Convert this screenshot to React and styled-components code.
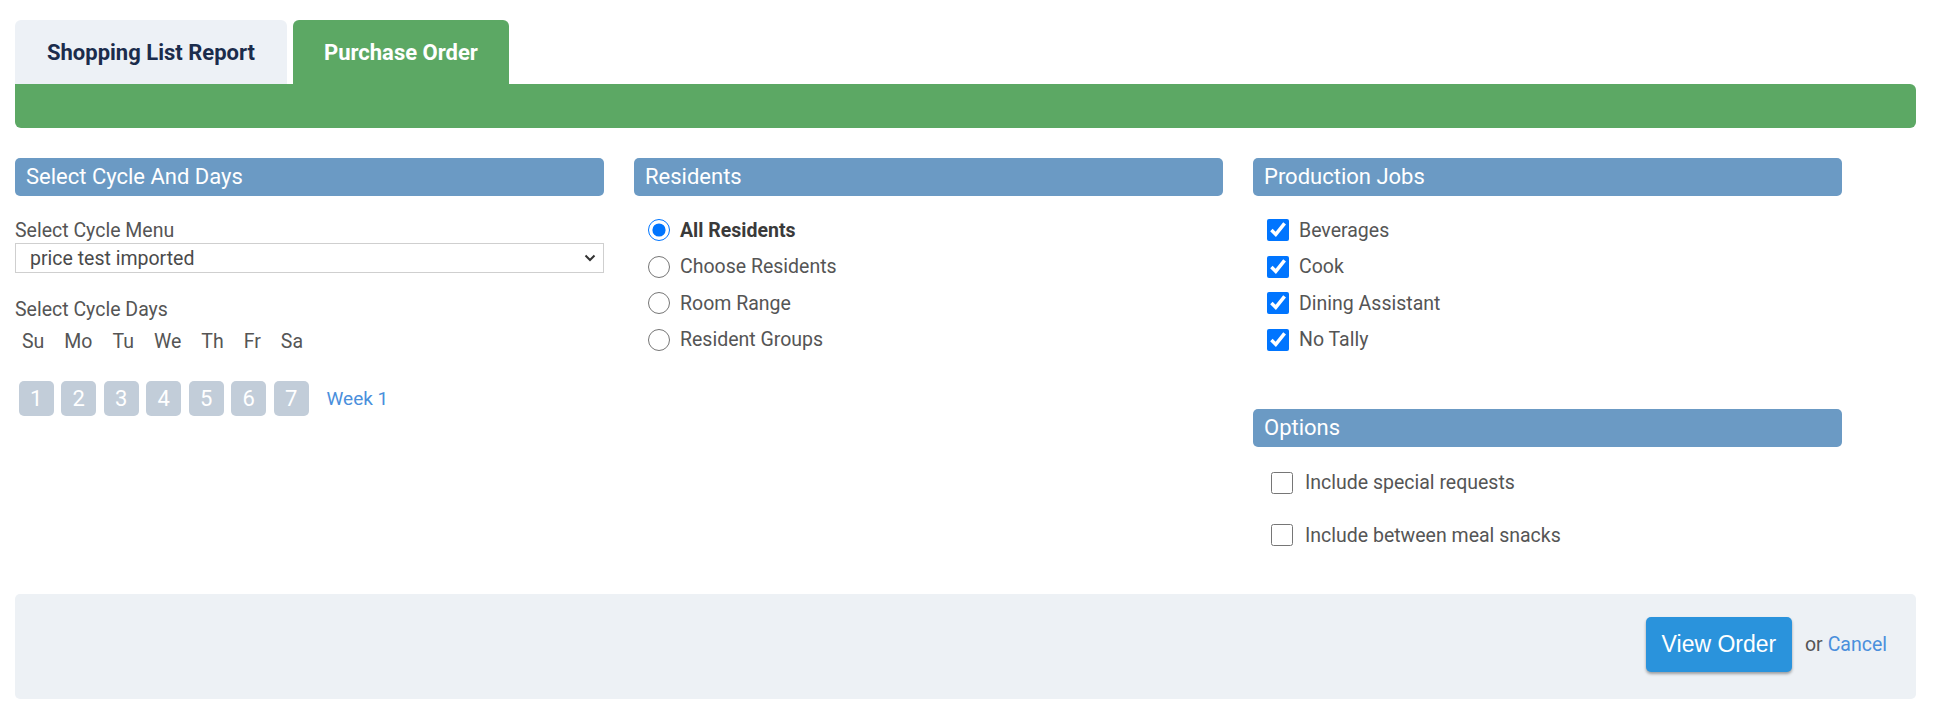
import React from "react";
import styled, { createGlobalStyle } from "styled-components";

const Global = createGlobalStyle`
  html, body { margin: 0; padding: 0; background: #fff; }
  body { font-family: Roboto, "Noto Sans", sans-serif; color: #555; }
  * { box-sizing: border-box; }
`;

const Page = styled.div`
  width: 1901px;
  margin-left: 15px;
  padding-top: 20px;
`;

const Tabs = styled.div`
  display: flex;
  gap: 6px;
`;

const Tab = styled.div`
  height: 64px;
  padding: 0 ${(p) => p.$pad}px;
  display: flex;
  align-items: center;
  border-radius: 6px 6px 0 0;
  font-size: 22px;
  font-weight: 700;
  background: ${(p) => (p.$active ? "#5ca864" : "#edf1f6")};
  color: ${(p) => (p.$active ? "#ffffff" : "#1b2c4c")};
`;

const GreenBar = styled.div`
  height: 44px;
  background: #5ca864;
  border-radius: 0 6px 6px 6px;
`;

const Grid = styled.div`
  display: grid;
  grid-template-columns: repeat(3, 589px);
  column-gap: 30px;
  margin-top: 30px;
  align-items: start;
`;

const Column = styled.div`
  display: flex;
  flex-direction: column;
`;

const Header = styled.div`
  height: 38px;
  line-height: 38px;
  padding-left: 11px;
  background: #6b9ac4;
  color: #fff;
  font-size: 22px;
  border-radius: 5px;
  margin-top: ${(p) => p.$mt || 0}px;
`;

const Label = styled.div`
  font-size: 19.5px;
  line-height: 24px;
  color: #555;
  margin-top: ${(p) => p.$mt || 0}px;
`;

const SelectWrap = styled.div`
  position: relative;
  height: 30px;
`;

const Select = styled.select`
  appearance: none;
  width: 100%;
  height: 30px;
  border: 1px solid #cfcfcf;
  border-radius: 0;
  background: #fff;
  padding: 0 0 0 14px;
  font-family: Roboto, "Noto Sans", sans-serif;
  font-size: 19.5px;
  color: #4a4a4a;
  outline: none;
`;

const Chevron = styled.svg`
  position: absolute;
  right: 8px;
  top: 10px;
  pointer-events: none;
`;

const DayNames = styled.div`
  display: flex;
  gap: 20px;
  padding-left: 7px;
  margin-top: ${(p) => p.$mt || 0}px;
`;

const DayName = styled.div`
  font-size: 19.5px;
  line-height: 24px;
  color: #555;
`;

const DayRow = styled.div`
  margin-top: ${(p) => p.$mt || 0}px;
  display: flex;
  align-items: center;
`;

const DayGrid = styled.div`
  display: grid;
  grid-template-columns: repeat(7, 42.5px);
  justify-items: center;
  align-items: center;
`;

const DayButton = styled.div`
  width: 35px;
  height: 35px;
  border-radius: 5px;
  background: #c2cdd9;
  color: #fff;
  font-size: 22px;
  display: flex;
  align-items: center;
  justify-content: center;
`;

const WeekLink = styled.a`
  margin-left: 14px;
  font-size: 19px;
  color: #4a8fdc;
  text-decoration: none;
`;

const List = styled.div`
  display: flex;
  flex-direction: column;
  margin-top: ${(p) => p.$mt || 0}px;
`;

const Row = styled.label`
  display: flex;
  align-items: center;
  height: ${(p) => p.$h}px;
  padding-left: ${(p) => p.$indent}px;
  font-size: 19.5px;
  color: ${(p) => (p.$bold ? "#3a3a3a" : "#555")};
  font-weight: ${(p) => (p.$bold ? 700 : 400)};
`;

const Input = styled.input`
  width: 22px;
  height: 22px;
  margin: 0 ${(p) => p.$gap}px 0 0;
  flex: none;
`;

const Footer = styled.div`
  margin-top: 32px;
  height: 105px;
  background: #edf1f5;
  border-radius: 5px;
  display: flex;
  justify-content: flex-end;
  align-items: center;
  padding: 0 29px 4px 0;
`;

const Button = styled.button`
  width: 146px;
  height: 55px;
  border: none;
  border-radius: 5px;
  background: #2a93dc;
  color: #fff;
  font-family: "Liberation Sans", Arial, sans-serif;
  font-size: 23px;
  box-shadow: 0 2px 3px rgba(0, 0, 0, 0.35);
  cursor: pointer;
`;

const Or = styled.span`
  margin-left: 13px;
  font-size: 19.5px;
  color: #555;
`;

const Cancel = styled.a`
  margin-left: 5px;
  font-size: 19.5px;
  color: #4a8fdc;
  text-decoration: none;
`;

const days = ["Su", "Mo", "Tu", "We", "Th", "Fr", "Sa"];

export default function App() {
  return (
    <>
      <Global />
      <Page>
        <Tabs>
          <Tab $pad={32}>Shopping List Report</Tab>
          <Tab $pad={31} $active>Purchase Order</Tab>
        </Tabs>
        <GreenBar />
        <Grid>
          <Column>
            <Header>Select Cycle And Days</Header>
            <Label $mt={23}>Select Cycle Menu</Label>
            <SelectWrap>
              <Select defaultValue="a">
                <option value="a">price test imported</option>
              </Select>
              <Chevron width="12" height="10" viewBox="0 0 12 10">
                <path d="M1.5 2.5 L6 7 L10.5 2.5" fill="none" stroke="#333" strokeWidth="2" />
              </Chevron>
            </SelectWrap>
            <Label $mt={25}>Select Cycle Days</Label>
            <DayNames $mt={8}>
              {days.map((d) => (
                <DayName key={d}>{d}</DayName>
              ))}
            </DayNames>
            <DayRow $mt={27}>
              <DayGrid>
                {[1, 2, 3, 4, 5, 6, 7].map((n) => (
                  <DayButton key={n}>{n}</DayButton>
                ))}
              </DayGrid>
              <WeekLink href="#">Week 1</WeekLink>
            </DayRow>
          </Column>
          <Column>
            <Header>Residents</Header>
            <List $mt={16}>
              {["All Residents", "Choose Residents", "Room Range", "Resident Groups"].map((r, i) => (
                <Row key={r} $h={36.5} $indent={14} $bold={i === 0}>
                  <Input type="radio" name="res" defaultChecked={i === 0} $gap={10} />
                  {r}
                </Row>
              ))}
            </List>
          </Column>
          <Column>
            <Header>Production Jobs</Header>
            <List $mt={16}>
              {["Beverages", "Cook", "Dining Assistant", "No Tally"].map((r) => (
                <Row key={r} $h={36.5} $indent={14}>
                  <Input type="checkbox" defaultChecked $gap={10} />
                  {r}
                </Row>
              ))}
            </List>
            <Header $mt={51}>Options</Header>
            <List $mt={9.5}>
              {["Include special requests", "Include between meal snacks"].map((r) => (
                <Row key={r} $h={52.5} $indent={18}>
                  <Input type="checkbox" $gap={12} />
                  {r}
                </Row>
              ))}
            </List>
          </Column>
        </Grid>
        <Footer>
          <Button>View Order</Button>
          <Or>or</Or>
          <Cancel href="#">Cancel</Cancel>
        </Footer>
      </Page>
    </>
  );
}
